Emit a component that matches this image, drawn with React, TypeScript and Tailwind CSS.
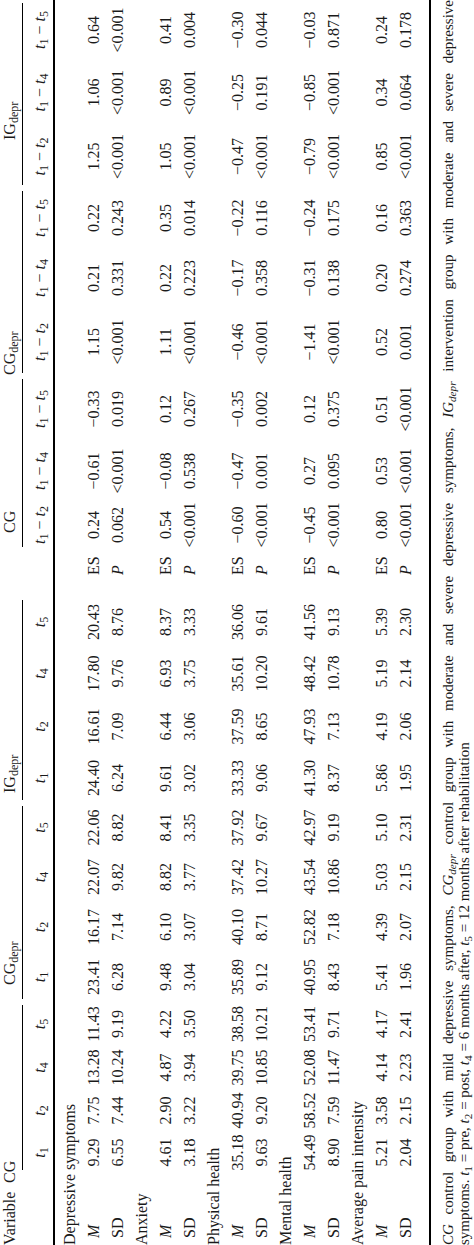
import React from "react";

const cols =
  "grid grid-cols-[72px_41px_43px_43px_44px_50px_50px_50px_49px_50px_53px_53px_50px_47px_50px_58px_66px_68px_60px_60px_63px_65px_60px]";

const sections = [
  {
    name: "Depressive symptoms",
    m: ["9.29", "7.75", "13.28", "11.43", "23.41", "16.17", "22.07", "22.06", "24.40", "16.61", "17.80", "20.43", "0.24", "−0.61", "−0.33", "1.15", "0.21", "0.22", "1.25", "1.06", "0.64"],
    sd: ["6.55", "7.44", "10.24", "9.19", "6.28", "7.14", "9.82", "8.82", "6.24", "7.09", "9.76", "8.76", "0.062", "<0.001", "0.019", "<0.001", "0.331", "0.243", "<0.001", "<0.001", "<0.001"],
  },
  {
    name: "Anxiety",
    m: ["4.61", "2.90", "4.87", "4.22", "9.48", "6.10", "8.82", "8.41", "9.61", "6.44", "6.93", "8.37", "0.54", "−0.08", "0.12", "1.11", "0.22", "0.35", "1.05", "0.89", "0.41"],
    sd: ["3.18", "3.22", "3.94", "3.50", "3.04", "3.07", "3.77", "3.35", "3.02", "3.06", "3.75", "3.33", "<0.001", "0.538", "0.267", "<0.001", "0.223", "0.014", "<0.001", "<0.001", "0.004"],
  },
  {
    name: "Physical health",
    m: ["35.18", "40.94", "39.75", "38.58", "35.89", "40.10", "37.42", "37.92", "33.33", "37.59", "35.61", "36.06", "−0.60", "−0.47", "−0.35", "−0.46", "−0.17", "−0.22", "−0.47", "−0.25", "−0.30"],
    sd: ["9.63", "9.20", "10.85", "10.21", "9.12", "8.71", "10.27", "9.67", "9.06", "8.65", "10.20", "9.61", "<0.001", "0.001", "0.002", "<0.001", "0.358", "0.116", "<0.001", "0.191", "0.044"],
  },
  {
    name: "Mental health",
    m: ["54.49", "58.52", "52.08", "53.41", "40.95", "52.82", "43.54", "42.97", "41.30", "47.93", "48.42", "41.56", "−0.45", "0.27", "0.12", "−1.41", "−0.31", "−0.24", "−0.79", "−0.85", "−0.03"],
    sd: ["8.90", "7.59", "11.47", "9.71", "8.43", "7.18", "10.86", "9.19", "8.37", "7.13", "10.78", "9.13", "<0.001", "0.095", "0.375", "<0.001", "0.138", "0.175", "<0.001", "<0.001", "0.871"],
  },
  {
    name: "Average pain intensity",
    m: ["5.21", "3.58", "4.14", "4.17", "5.41", "4.39", "5.03", "5.10", "5.86", "4.19", "5.19", "5.39", "0.80", "0.53", "0.51", "0.52", "0.20", "0.16", "0.85", "0.34", "0.24"],
    sd: ["2.04", "2.15", "2.23", "2.41", "1.96", "2.07", "2.15", "2.31", "1.95", "2.06", "2.14", "2.30", "<0.001", "<0.001", "<0.001", "0.001", "0.274", "0.363", "<0.001", "0.064", "0.178"],
  },
];

const T = ({ n }: { n: number }) => (
  <>
    <i>t</i>
    <sub>{n}</sub>
  </>
);

const Diff = ({ n }: { n: number }) => (
  <>
    <T n={1} /> − <T n={n} />
  </>
);

const Group = ({ span, label, offset }: { span: string; label: React.ReactNode; offset: string }) => (
  <div className={`${span} flex flex-col`}>
    <div className={`h-[22px] leading-[20px] whitespace-nowrap ${offset}`}>{label}</div>
    <div className="mx-[3px] border-b border-black" />
  </div>
);

function DataRow({ label, values, stat }: { label: React.ReactNode; values: string[]; stat: React.ReactNode }) {
  return (
    <div className={`${cols} h-[24px] leading-[24px]`}>
      <div className="pl-[7px]">{label}</div>
      {values.slice(0, 12).map((v, i) => (
        <div key={i} className="text-center whitespace-nowrap">
          {v}
        </div>
      ))}
      <div className="pl-[22px]">{stat}</div>
      {values.slice(12).map((v, i) => (
        <div key={i + 12} className="text-center whitespace-nowrap">
          {v}
        </div>
      ))}
    </div>
  );
}

export default function App() {
  return (
    <div className="w-[474px] h-[1245px] overflow-hidden bg-white">
      <div className="w-[1245px] h-[474px] origin-top-left [transform:translateY(1245px)_rotate(-90deg)] font-['Liberation_Serif',serif] text-[16px] text-[#1a1a1a]">
        {/* group header */}
        <div className={cols}>
          <div className="h-[22px] leading-[20px]">Variable</div>
          <Group span="col-span-4" offset="-ml-[10px]" label="CG" />
          <Group span="col-span-4" offset="ml-[17px]" label={<>CG<sub>depr</sub></>} />
          <Group span="col-span-4" offset="ml-[10px]" label={<>IG<sub>depr</sub></>} />
          <div />
          <Group span="col-span-3" offset="ml-[17px]" label="CG" />
          <Group span="col-span-3" offset="ml-[1px]" label={<>CG<sub>depr</sub></>} />
          <Group span="col-span-3" offset="ml-[48px]" label={<>IG<sub>depr</sub></>} />
        </div>

        {/* time points */}
        <div className={`${cols} h-[30px] pt-[5px] leading-[24px]`}>
          <div />
          {[0, 1, 2].map((g) =>
            [1, 2, 4, 5].map((n) => (
              <div key={`${g}-${n}`} className="text-center">
                <T n={n} />
              </div>
            ))
          )}
          <div />
          {[0, 1, 2].map((g) =>
            [2, 4, 5].map((n) => (
              <div key={`d${g}-${n}`} className="text-center whitespace-nowrap">
                <Diff n={n} />
              </div>
            ))
          )}
        </div>
        <div className="h-[2px] bg-black" />

        <div className="pt-[3px] pb-[11px]">
          {sections.map((s) => (
            <React.Fragment key={s.name}>
              <div className="h-[24px] leading-[24px] whitespace-nowrap">{s.name}</div>
              <DataRow label={<i>M</i>} values={s.m} stat="ES" />
              <DataRow label="SD" values={s.sd} stat={<i>P</i>} />
            </React.Fragment>
          ))}
        </div>
        <div className="h-[2px] bg-black" />

        <div className="mt-[9px] text-[15px] leading-[16px]">
          <div className="whitespace-nowrap [text-align-last:justify]">
            <i>CG</i> control group with mild depressive symptoms, <i>CG<sub>depr</sub></i> control group with moderate and
            severe depressive symptoms, <i>IG<sub>depr</sub></i> intervention group with moderate and severe depressive
          </div>
          <div className="whitespace-nowrap">
            symptoms. <T n={1} /> = pre, <T n={2} /> = post, <T n={4} /> = 6 months after, <T n={5} /> = 12 months after
            rehabilitation
          </div>
        </div>
      </div>
    </div>
  );
}
